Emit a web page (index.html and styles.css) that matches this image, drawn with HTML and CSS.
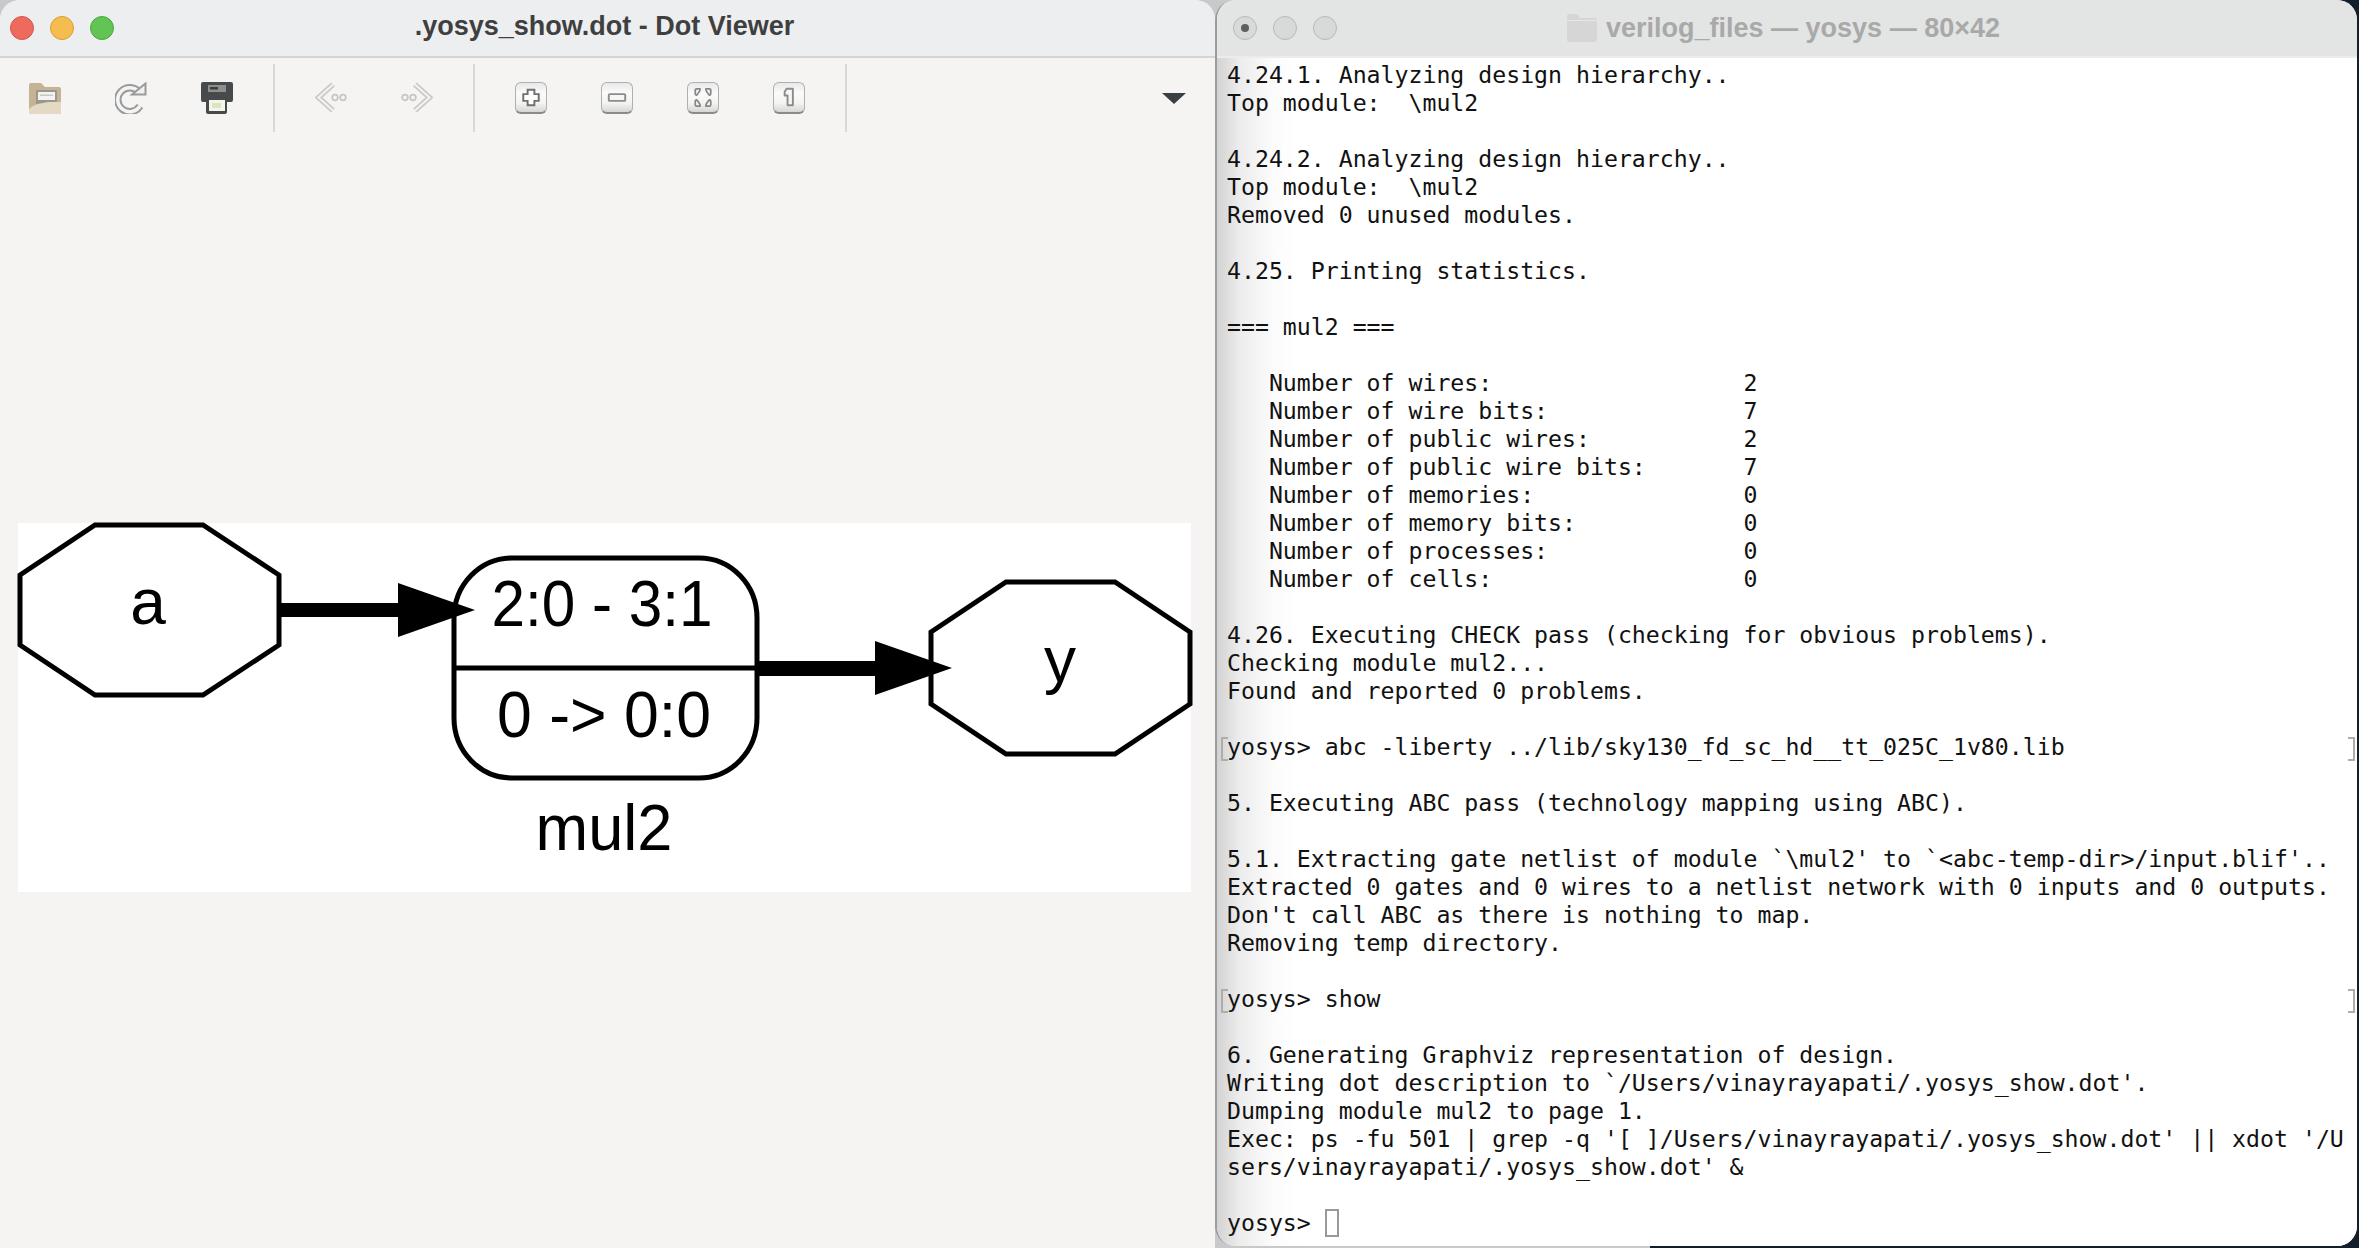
FILE: index.html
```html
<!DOCTYPE html>
<html lang="en">
<head>
<meta charset="utf-8">
<title>Dot Viewer and Terminal</title>
<link rel="stylesheet" href="styles.css">
</head>
<body>
<div class="desktop">
  <section class="viewer">
    <header class="viewer-title">
      <div class="lights">
        <span class="light red"></span><span class="light yellow"></span><span class="light green"></span>
      </div>
      <h1 class="viewer-name">.yosys_show.dot - Dot Viewer</h1>
    </header>
    <div class="toolbar">
      <div class="tool">
        <svg class="icon" viewBox="0 0 32 32">
          <path d="M0 3a2 2 0 0 1 2-2h10l4 4h14a2 2 0 0 1 2 2v23a2 2 0 0 1-2 2H2a2 2 0 0 1-2-2z" fill="#c6b393"/>
          <rect x="7" y="8" width="21" height="14" rx="1" fill="#9a9790"/>
          <rect x="9" y="10" width="17" height="8" fill="#f4f3ef"/>
          <rect x="11" y="12.500" width="13" height="1.500" fill="#c9c7c1"/>
          <path d="M0 27q5-5 14-6 4-1 7-1h11v10a2 2 0 0 1-2 2H2a2 2 0 0 1-2-2z" fill="#e4d9c2"/>
        </svg>
      </div>
      <div class="tool">
        <svg class="icon" viewBox="0 0 32 32">
          <path d="M24 10A12 12 0 1 0 25 24" fill="none" stroke="#9a9a9a" stroke-width="7.500"/>
          <path d="M24 10A12 12 0 1 0 25 24" fill="none" stroke="#f4f4f4" stroke-width="3.500"/>
          <path d="M17 12.500L30.500 12.500V1.500z" fill="#f0f0f0" stroke="#9a9a9a" stroke-width="2"/>
        </svg>
      </div>
      <div class="tool">
        <svg class="icon" viewBox="0 0 32 32">
          <path d="M2 0h28a2 2 0 0 1 2 2v16a2 2 0 0 1-2 2h-4v10a2 2 0 0 1-2 2H7a2 2 0 0 1-2-2V20H2a2 2 0 0 1-2-2V2a2 2 0 0 1 2-2z" fill="#47494a"/>
          <rect x="7" y="3" width="18" height="7" fill="#8d8e8e"/>
          <rect x="9" y="5" width="8" height="2.500" fill="#3c3d3d"/>
          <rect x="8" y="18" width="16" height="11" fill="#f2f5ea"/>
          <rect x="11" y="21" width="9" height="5" fill="#d8e6c0"/>
        </svg>
      </div>
      <span class="separator"></span>
      <div class="tool">
        <svg class="icon" viewBox="0 0 32 32">
          <path d="M18 2.500L3.500 15.500 18 28.500" fill="none" stroke="#c9c9c8" stroke-width="5.500"/>
          <path d="M18 2.500L3.500 15.500 18 28.500" fill="none" stroke="#f3f3f2" stroke-width="2"/>
          <circle cx="20" cy="15.500" r="2.800" fill="none" stroke="#c6c6c5" stroke-width="1.800"/>
          <circle cx="28" cy="15.500" r="2.800" fill="none" stroke="#c6c6c5" stroke-width="1.800"/>
        </svg>
      </div>
      <div class="tool">
        <svg class="icon" viewBox="0 0 32 32">
          <path d="M14 2.500L28.500 15.500 14 28.500" fill="none" stroke="#c9c9c8" stroke-width="5.500"/>
          <path d="M14 2.500L28.500 15.500 14 28.500" fill="none" stroke="#f3f3f2" stroke-width="2"/>
          <circle cx="12" cy="15.500" r="2.800" fill="none" stroke="#c6c6c5" stroke-width="1.800"/>
          <circle cx="4" cy="15.500" r="2.800" fill="none" stroke="#c6c6c5" stroke-width="1.800"/>
        </svg>
      </div>
      <span class="separator"></span>
      <div class="tool">
        <span class="zoom-key">
          <svg class="glyph" viewBox="0 0 30 30"><path d="M11.500 7h7v4.500H23v7h-4.500V23h-7v-4.500H7v-7h4.500z" fill="#fff" stroke="#707070" stroke-width="2"/></svg>
        </span>
      </div>
      <div class="tool">
        <span class="zoom-key">
          <svg class="glyph" viewBox="0 0 30 30"><rect x="6.500" y="11.500" width="17" height="7" rx="1" fill="#f6f6f6" stroke="#8c8c8c" stroke-width="2"/></svg>
        </span>
      </div>
      <div class="tool">
        <span class="zoom-key">
          <svg class="glyph" viewBox="0 0 30 30"><path d="M7 7.500Q7 6 8.500 6H12Q12.500 8 8.500 12.500 7 12.500 7 11zM23 7.500Q23 6 21.500 6H18Q17.500 8 21.500 12.500 23 12.500 23 11zM7 22.500Q7 24 8.500 24H12Q12.500 22 8.500 17.500 7 17.500 7 19zM23 22.500Q23 24 21.500 24H18Q17.500 22 21.500 17.500 23 17.500 23 19z" fill="#f6f6f6" stroke="#868686" stroke-width="1.800" stroke-linejoin="round"/></svg>
        </span>
      </div>
      <div class="tool">
        <span class="zoom-key">
          <svg class="glyph" viewBox="0 0 30 30"><path d="M12.500 6H19v17h-5.500V13H10.500V9z" fill="#f6f6f6" stroke="#8c8c8c" stroke-width="2" stroke-linejoin="round"/></svg>
        </span>
      </div>
      <span class="separator"></span>
      <span class="overflow-arrow"></span>
    </div>
    <div class="canvas">
      <svg class="graph" viewBox="18 523 1173 369" role="img" aria-label="mul2 schematic">
        <rect class="sheet" x="18" y="523" width="1173" height="369"/>
        <polygon class="node" points="95,525 203,525 279,575 279,645 203,695 95,695 20,645 20,575"/>
        <polygon class="node" points="1006,582 1115,582 1190,632 1190,704 1115,754 1006,754 931,704 931,632"/>
        <rect class="node" x="454" y="558" width="303" height="220" rx="58" ry="60"/>
        <line class="node" x1="454" y1="668" x2="757" y2="668"/>
        <rect class="edge" x="280" y="603" width="120" height="14"/>
        <polygon class="edge" points="398,583 475,610 398,637"/>
        <rect class="edge" x="757" y="661" width="120" height="15"/>
        <polygon class="edge" points="875,641 952,668 875,695"/>
        <text class="label" x="148" y="624">a</text>
        <text class="label" x="602" y="626" textLength="221" lengthAdjust="spacingAndGlyphs">2:0 - 3:1</text>
        <text class="label" x="604" y="737" textLength="214" lengthAdjust="spacingAndGlyphs">0 -&gt; 0:0</text>
        <text class="label" x="604" y="850" textLength="137" lengthAdjust="spacingAndGlyphs">mul2</text>
        <text class="label" x="1060" y="682">y</text>
      </svg>
    </div>
  </section>
  <section class="terminal">
    <header class="terminal-title">
      <div class="lights lights-off">
        <span class="light off dot"></span><span class="light off"></span><span class="light off"></span>
      </div>
      <div class="terminal-name">
        <svg class="folder" viewBox="0 0 30 28"><path d="M0 2a2 2 0 0 1 2-2h8l3 4h15a2 2 0 0 1 2 2v20a2 2 0 0 1-2 2H2a2 2 0 0 1-2-2z" fill="#d6d6d6"/><rect x="0" y="6" width="30" height="1" fill="#e6e6e6"/></svg>
        <h2 class="terminal-text">verilog_files — yosys — 80×42</h2>
      </div>
    </header>
    <div class="screen">
      <div class="line">4.24.1. Analyzing design hierarchy..</div>
      <div class="line">Top module:  \mul2</div>
      <div class="line"></div>
      <div class="line">4.24.2. Analyzing design hierarchy..</div>
      <div class="line">Top module:  \mul2</div>
      <div class="line">Removed 0 unused modules.</div>
      <div class="line"></div>
      <div class="line">4.25. Printing statistics.</div>
      <div class="line"></div>
      <div class="line">=== mul2 ===</div>
      <div class="line"></div>
      <div class="line">   Number of wires:                  2</div>
      <div class="line">   Number of wire bits:              7</div>
      <div class="line">   Number of public wires:           2</div>
      <div class="line">   Number of public wire bits:       7</div>
      <div class="line">   Number of memories:               0</div>
      <div class="line">   Number of memory bits:            0</div>
      <div class="line">   Number of processes:              0</div>
      <div class="line">   Number of cells:                  0</div>
      <div class="line"></div>
      <div class="line">4.26. Executing CHECK pass (checking for obvious problems).</div>
      <div class="line">Checking module mul2...</div>
      <div class="line">Found and reported 0 problems.</div>
      <div class="line"></div>
      <div class="line marked">yosys&gt; abc -liberty ../lib/sky130_fd_sc_hd__tt_025C_1v80.lib</div>
      <div class="line"></div>
      <div class="line">5. Executing ABC pass (technology mapping using ABC).</div>
      <div class="line"></div>
      <div class="line">5.1. Extracting gate netlist of module `\mul2' to `&lt;abc-temp-dir&gt;/input.blif'..</div>
      <div class="line">Extracted 0 gates and 0 wires to a netlist network with 0 inputs and 0 outputs.</div>
      <div class="line">Don't call ABC as there is nothing to map.</div>
      <div class="line">Removing temp directory.</div>
      <div class="line"></div>
      <div class="line marked">yosys&gt; show</div>
      <div class="line"></div>
      <div class="line">6. Generating Graphviz representation of design.</div>
      <div class="line">Writing dot description to `/Users/vinayrayapati/.yosys_show.dot'.</div>
      <div class="line">Dumping module mul2 to page 1.</div>
      <div class="line">Exec: ps -fu 501 | grep -q '[ ]/Users/vinayrayapati/.yosys_show.dot' || xdot '/U</div>
      <div class="line">sers/vinayrayapati/.yosys_show.dot' &amp;</div>
      <div class="line"></div>
      <div class="line">yosys&gt; <span class="cursor"></span></div>
    </div>
  </section>
</div>
</body>
</html>
```

FILE: styles.css
```css
* { box-sizing: border-box; }

html, body {
  margin: 0;
  height: 100%;
  overflow: hidden;
}

.desktop {
  display: flex;
  align-items: flex-start;
  width: 2359px;
  height: 1248px;
  background: linear-gradient(to right, #c9c9c9 0, #c9c9c9 1650px, #141f2c 1650px, #141f2c 100%);
}

/* ---------- Dot viewer ---------- */
.viewer {
  display: flex;
  flex-direction: column;
  width: 1215px;
  height: 1248px;
  flex: none;
  background: #f5f4f2;
  border-radius: 20px 20px 0 0;
  overflow: hidden;
}

.viewer-title {
  display: flex;
  align-items: center;
  height: 58px;
  flex: none;
  padding-left: 10px;
  background: #edeef0;
  border-bottom: 2px solid #d5d4d2;
  position: relative;
}

.lights {
  display: flex;
  gap: 16px;
}

.light {
  width: 24px;
  height: 24px;
  border-radius: 50%;
  display: flex;
  align-items: center;
  justify-content: center;
}

.red { background: #ee6a5f; border: 1px solid #d5544a; }
.yellow { background: #f5bd4f; border: 1px solid #d69e31; }
.green { background: #61c454; border: 1px solid #4ba63f; }

.viewer-name {
  margin: 0;
  position: absolute;
  left: 0;
  right: 6px;
  top: 11px;
  text-align: center;
  font: 700 27px/30px "Liberation Sans", Arial, sans-serif;
  color: #3f3f3f;
}

.toolbar {
  display: flex;
  align-items: center;
  height: 80px;
  flex: none;
  padding-left: 2px;
  position: relative;
}

.tool {
  width: 86px;
  height: 32px;
  flex: none;
  display: flex;
  justify-content: center;
}

.icon {
  width: 32px;
  height: 32px;
  display: block;
  filter: blur(0.5px);
}

.separator {
  width: 2px;
  height: 68px;
  margin: 0 13px;
  flex: none;
  background: #d9d8d6;
}

.zoom-key {
  width: 32px;
  height: 32px;
  display: block;
  border-radius: 6px;
  border: 1px solid #b0b0ae;
  border-bottom: 2px solid #8a8a8a;
  background: linear-gradient(#e8e8e7, #fbfbfb 35%, #f3f3f2 70%, #d6d6d5);
  filter: blur(0.5px);
}

.glyph {
  width: 30px;
  height: 29px;
  display: block;
}

.overflow-arrow {
  margin-left: 302px;
  width: 0;
  height: 0;
  border-left: 12px solid transparent;
  border-right: 12px solid transparent;
  border-top: 11px solid #3a3f41;
}

.canvas {
  flex: 1;
  padding: 385px 0 0 18px;
}

.graph {
  display: block;
  width: 1173px;
  height: 369px;
  overflow: visible;
}

.sheet { fill: #fff; }

.node {
  fill: #fff;
  stroke: #000;
  stroke-width: 5;
}

.edge { fill: #000; }

.label {
  font-family: "Liberation Sans", Arial, sans-serif;
  font-size: 64px;
  fill: #000;
  text-anchor: middle;
}

/* ---------- Terminal ---------- */
.terminal {
  display: flex;
  flex-direction: column;
  width: 1142px;
  height: 1246px;
  flex: none;
  background: #fff;
  border-left: 2px solid #9c9c9c;
  border-radius: 20px 20px 20px 20px;
  overflow: hidden;
}

.terminal-title {
  display: flex;
  align-items: center;
  height: 58px;
  flex: none;
  padding-left: 16px;
  background: #e3e4e4;
  border-bottom: 2px solid #ececec;
  position: relative;
}

.off {
  background: #d8d9d9;
  border: 1px solid #b7b8b8;
}

.dot::after {
  content: "";
  width: 8px;
  height: 8px;
  border-radius: 50%;
  background: #5e5e5e;
}

.terminal-name {
  position: absolute;
  left: 350px;
  top: 13px;
  display: flex;
  align-items: center;
  gap: 9px;
}

.folder {
  width: 30px;
  height: 28px;
  display: block;
}

.terminal-text {
  margin: 0;
  font: 700 27px/30px "Liberation Sans", Arial, sans-serif;
  color: #a9a9a9;
  white-space: nowrap;
}

.screen {
  flex: 1;
  padding: 3px 0 0 10px;
  background: linear-gradient(to right, #d2d2d2 0, #ececec 22px, #fbfbfb 55px, #fff 80px);
  font: 400 23.2px/28px "DejaVu Sans Mono", monospace;
  color: #111;
}

.line {
  height: 28px;
  white-space: pre;
  position: relative;
}

.marked::before,
.marked::after {
  content: "";
  position: absolute;
  top: 4px;
  width: 5px;
  height: 20px;
  border: 2px solid #adadad;
}

.marked::before {
  left: -6px;
  border-right: 0;
}

.marked::after {
  left: 1121px;
  border-left: 0;
}

.cursor {
  display: inline-block;
  width: 14px;
  height: 28px;
  border: 2px solid #999;
  vertical-align: top;
}
```
